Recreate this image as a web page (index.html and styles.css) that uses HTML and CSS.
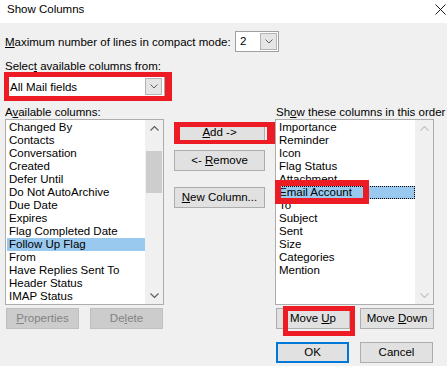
FILE: index.html
```html
<!DOCTYPE html>
<html>
<head>
<meta charset="utf-8">
<link rel="stylesheet" href="styles.css">
</head>
<body>
<div class="titlebar">
  <span class="title">Show Columns</span>
  <svg class="close" width="11" height="11" viewBox="0 0 11 11"><path d="M0.5 0.5 L10.5 10.5 M10.5 0.5 L0.5 10.5" stroke="#1a1a1a" stroke-width="1" fill="none"/></svg>
</div>
<div class="content">
  <div class="row-lines">
    <span class="lbl"><u>M</u>aximum number of lines in compact mode:</span>
    <div class="spin">
      <span class="spin-val">2</span>
      <span class="dd small"><svg width="8" height="5" viewBox="0 0 8 5"><path d="M0.5 0.5 L4 4 L7.5 0.5" stroke="#606060" fill="none"/></svg></span>
    </div>
  </div>
  <div class="lbl select-lbl">Selec<u>t</u> available columns from:</div>
  <div class="combo-wrap">
    <div class="combo">
      <span class="combo-val">All Mail fields</span>
      <span class="dd big"><svg width="8" height="5" viewBox="0 0 8 5"><path d="M0.5 0.5 L4 4 L7.5 0.5" stroke="#606060" fill="none"/></svg></span>
    </div>
    <div class="hl hl-combo"></div>
  </div>
  <div class="grid">
    <div class="lbl col-lbl">A<u>v</u>ailable columns:</div>
    <div></div>
    <div class="lbl col-lbl right-lbl">Sh<u>o</u>w these columns in this order</div>

    <div class="list">
      <div class="rows">
        <div class="row">Changed By</div>
        <div class="row">Contacts</div>
        <div class="row">Conversation</div>
        <div class="row">Created</div>
        <div class="row">Defer Until</div>
        <div class="row">Do Not AutoArchive</div>
        <div class="row">Due Date</div>
        <div class="row">Expires</div>
        <div class="row">Flag Completed Date</div>
        <div class="row sel">Follow Up Flag</div>
        <div class="row">From</div>
        <div class="row">Have Replies Sent To</div>
        <div class="row">Header Status</div>
        <div class="row">IMAP Status</div>
      </div>
      <div class="sbar">
        <div class="arrow"><svg width="9" height="5" viewBox="0 0 9 5"><path d="M0.5 4.5 L4.5 0.5 L8.5 4.5" stroke="#606060" stroke-width="1.2" fill="none"/></svg></div>
        <div class="track"><div class="thumb"></div></div>
        <div class="arrow"><svg width="9" height="5" viewBox="0 0 9 5"><path d="M0.5 0.5 L4.5 4.5 L8.5 0.5" stroke="#606060" stroke-width="1.2" fill="none"/></svg></div>
      </div>
    </div>

    <div class="mid">
      <div class="btn-wrap add-wrap">
        <div class="btn mid-btn"><u>A</u>dd -&gt;</div>
        <div class="hl hl-add"></div>
      </div>
      <div class="btn mid-btn remove">&lt;- <u>R</u>emove</div>
      <div class="btn mid-btn newcol"><u>N</u>ew Column...</div>
    </div>

    <div class="list">
      <div class="rows">
        <div class="row">Importance</div>
        <div class="row">Reminder</div>
        <div class="row">Icon</div>
        <div class="row">Flag Status</div>
        <div class="row">Attachment</div>
        <div class="row sel focus">Email Account</div>
        <div class="row">To</div>
        <div class="row">Subject</div>
        <div class="row">Sent</div>
        <div class="row">Size</div>
        <div class="row">Categories</div>
        <div class="row">Mention</div>
      </div>
      <div class="sbar disabled">
        <div class="arrow"><svg width="9" height="5" viewBox="0 0 9 5"><path d="M0.5 4.5 L4.5 0.5 L8.5 4.5" stroke="#c4c4c4" stroke-width="1.2" fill="none"/></svg></div>
        <div class="track"></div>
        <div class="arrow"><svg width="9" height="5" viewBox="0 0 9 5"><path d="M0.5 0.5 L4.5 4.5 L8.5 0.5" stroke="#c4c4c4" stroke-width="1.2" fill="none"/></svg></div>
      </div>
      <div class="hl hl-email"></div>
    </div>

    <div class="btn-row left-btns">
      <div class="btn disabled w73"><u>P</u>roperties</div>
      <div class="btn disabled w73">De<u>l</u>ete</div>
    </div>
    <div></div>
    <div class="btn-row right-btns">
      <div class="btn-wrap">
        <div class="btn w74">Move <u>U</u>p</div>
        <div class="hl hl-up"></div>
      </div>
      <div class="btn w77">Move <u>D</u>own</div>
    </div>

    <div></div>
    <div></div>
    <div class="btn-row ok-row">
      <div class="btn ok w73">OK</div>
      <div class="btn w73">Cancel</div>
    </div>
  </div>
</div>
</body>
</html>
```

FILE: styles.css
```css
* { box-sizing: border-box; }
html, body {
  margin: 0;
  padding: 0;
}
body {
  width: 447px;
  height: 366px;
  overflow: hidden;
  background: #f0f0f0;
  font-family: "Liberation Sans", Arial, sans-serif;
  font-size: 11.5px;
  color: #000;
}
u { text-decoration: underline; text-underline-offset: 1px; }

.titlebar {
  height: 23px;
  background: #fff;
  display: flex;
  justify-content: space-between;
  align-items: flex-start;
  padding-left: 7px;
}
.title {
  line-height: 14px;
  padding-top: 2px;
  color: #000;
}
.close {
  margin-top: 4px;
  margin-right: 1px;
}

.content {
  padding-top: 8px;
}
.lbl {
  line-height: 14px;
  white-space: nowrap;
}
.row-lines {
  display: flex;
  align-items: center;
  height: 21px;
  padding-left: 5px;
}
.row-lines .lbl { width: 230px; }
.spin {
  width: 44px;
  height: 21px;
  background: #fff;
  border: 1px solid #a0a0a0;
  display: flex;
  justify-content: space-between;
  align-items: flex-start;
  padding: 1px 1px 0 4px;
}
.spin-val { line-height: 17px; }
.dd {
  background: #e5e5e5;
  border: 1px solid #b4b4b4;
  display: flex;
  align-items: center;
  justify-content: center;
}
.dd.small { width: 17px; height: 17px; }
.dd.big { width: 17px; height: 17px; }

.select-lbl {
  margin-top: 7px;
  padding-left: 5px;
}
.combo-wrap {
  position: relative;
  margin-top: 3px;
  margin-left: 6px;
  width: 159px;
}
.combo {
  height: 21px;
  background: #fff;
  border: 1px solid #a8a8a8;
  display: flex;
  justify-content: space-between;
  align-items: center;
  padding: 0 2px 0 3px;
}
.combo-val { line-height: 19px; padding-top: 2px; }

.hl {
  position: absolute;
  border: 5px solid #ed1c24;
  pointer-events: none;
}
.hl-combo { left: -2px; top: -4px; width: 168px; height: 29px; border-right-width: 7px; }

.grid {
  margin-top: 8px;
  margin-left: 5px;
  display: grid;
  grid-template-columns: 159px 91px 159px;
  column-gap: 10px;
}
.right-lbl { padding-left: 1px; overflow: visible; }

.list {
  position: relative;
  height: 186px;
  background: #fff;
  border: 1px solid #adadad;
  display: flex;
}
.rows {
  flex: 1;
  padding: 1px 0 0 1px;
  min-width: 0;
}
.row {
  height: 13px;
  line-height: 13px;
  padding-left: 2px;
  white-space: nowrap;
}
.row.sel { background: #99c9ef; }
.row.focus { outline: 1px dotted #000; outline-offset: -1px; }

.sbar {
  width: 18px;
  background: #f0f0f0;
  display: flex;
  flex-direction: column;
}
.arrow {
  height: 17px;
  display: flex;
  align-items: center;
  justify-content: center;
}
.track { flex: 1; }
.thumb {
  margin-top: 14px;
  margin-left: 1px;
  margin-right: 1px;
  height: 42px;
  background: #cdcdcd;
}

.mid {
  display: flex;
  flex-direction: column;
}
.btn {
  height: 21px;
  line-height: 19px;
  border: 1px solid #adadad;
  background: #e1e1e1;
  text-align: center;
  white-space: nowrap;
}
.btn.disabled {
  background: #cccccc;
  border-color: #bfbfbf;
  color: #838383;
}
.btn-wrap { position: relative; }
.add-wrap { margin-top: 3px; }
.mid-btn { width: 91px; }
.remove { margin-top: 7px; }
.newcol { margin-top: 16px; }
.hl-add { left: 0; top: 0; width: 102px; height: 22px; border-right-width: 9px; border-bottom-width: 4px; border-left-width: 6px; }
.hl-email { left: -1px; top: 60px; width: 94px; height: 24px; border-width: 6px; }
.hl-up { left: 7px; top: -2px; width: 72px; height: 30px; }

.btn-row {
  display: flex;
  margin-top: 3px;
  margin-left: 1px;
}
.left-btns { gap: 11px; }
.right-btns { gap: 10px; }
.ok-row { margin-top: 13px; gap: 11px; }
.w73 { width: 73px; }
.w74 { width: 74px; }
.w77 { width: 77px; }
.btn.ok { border: 2px solid #0078d7; line-height: 17px; }
```
